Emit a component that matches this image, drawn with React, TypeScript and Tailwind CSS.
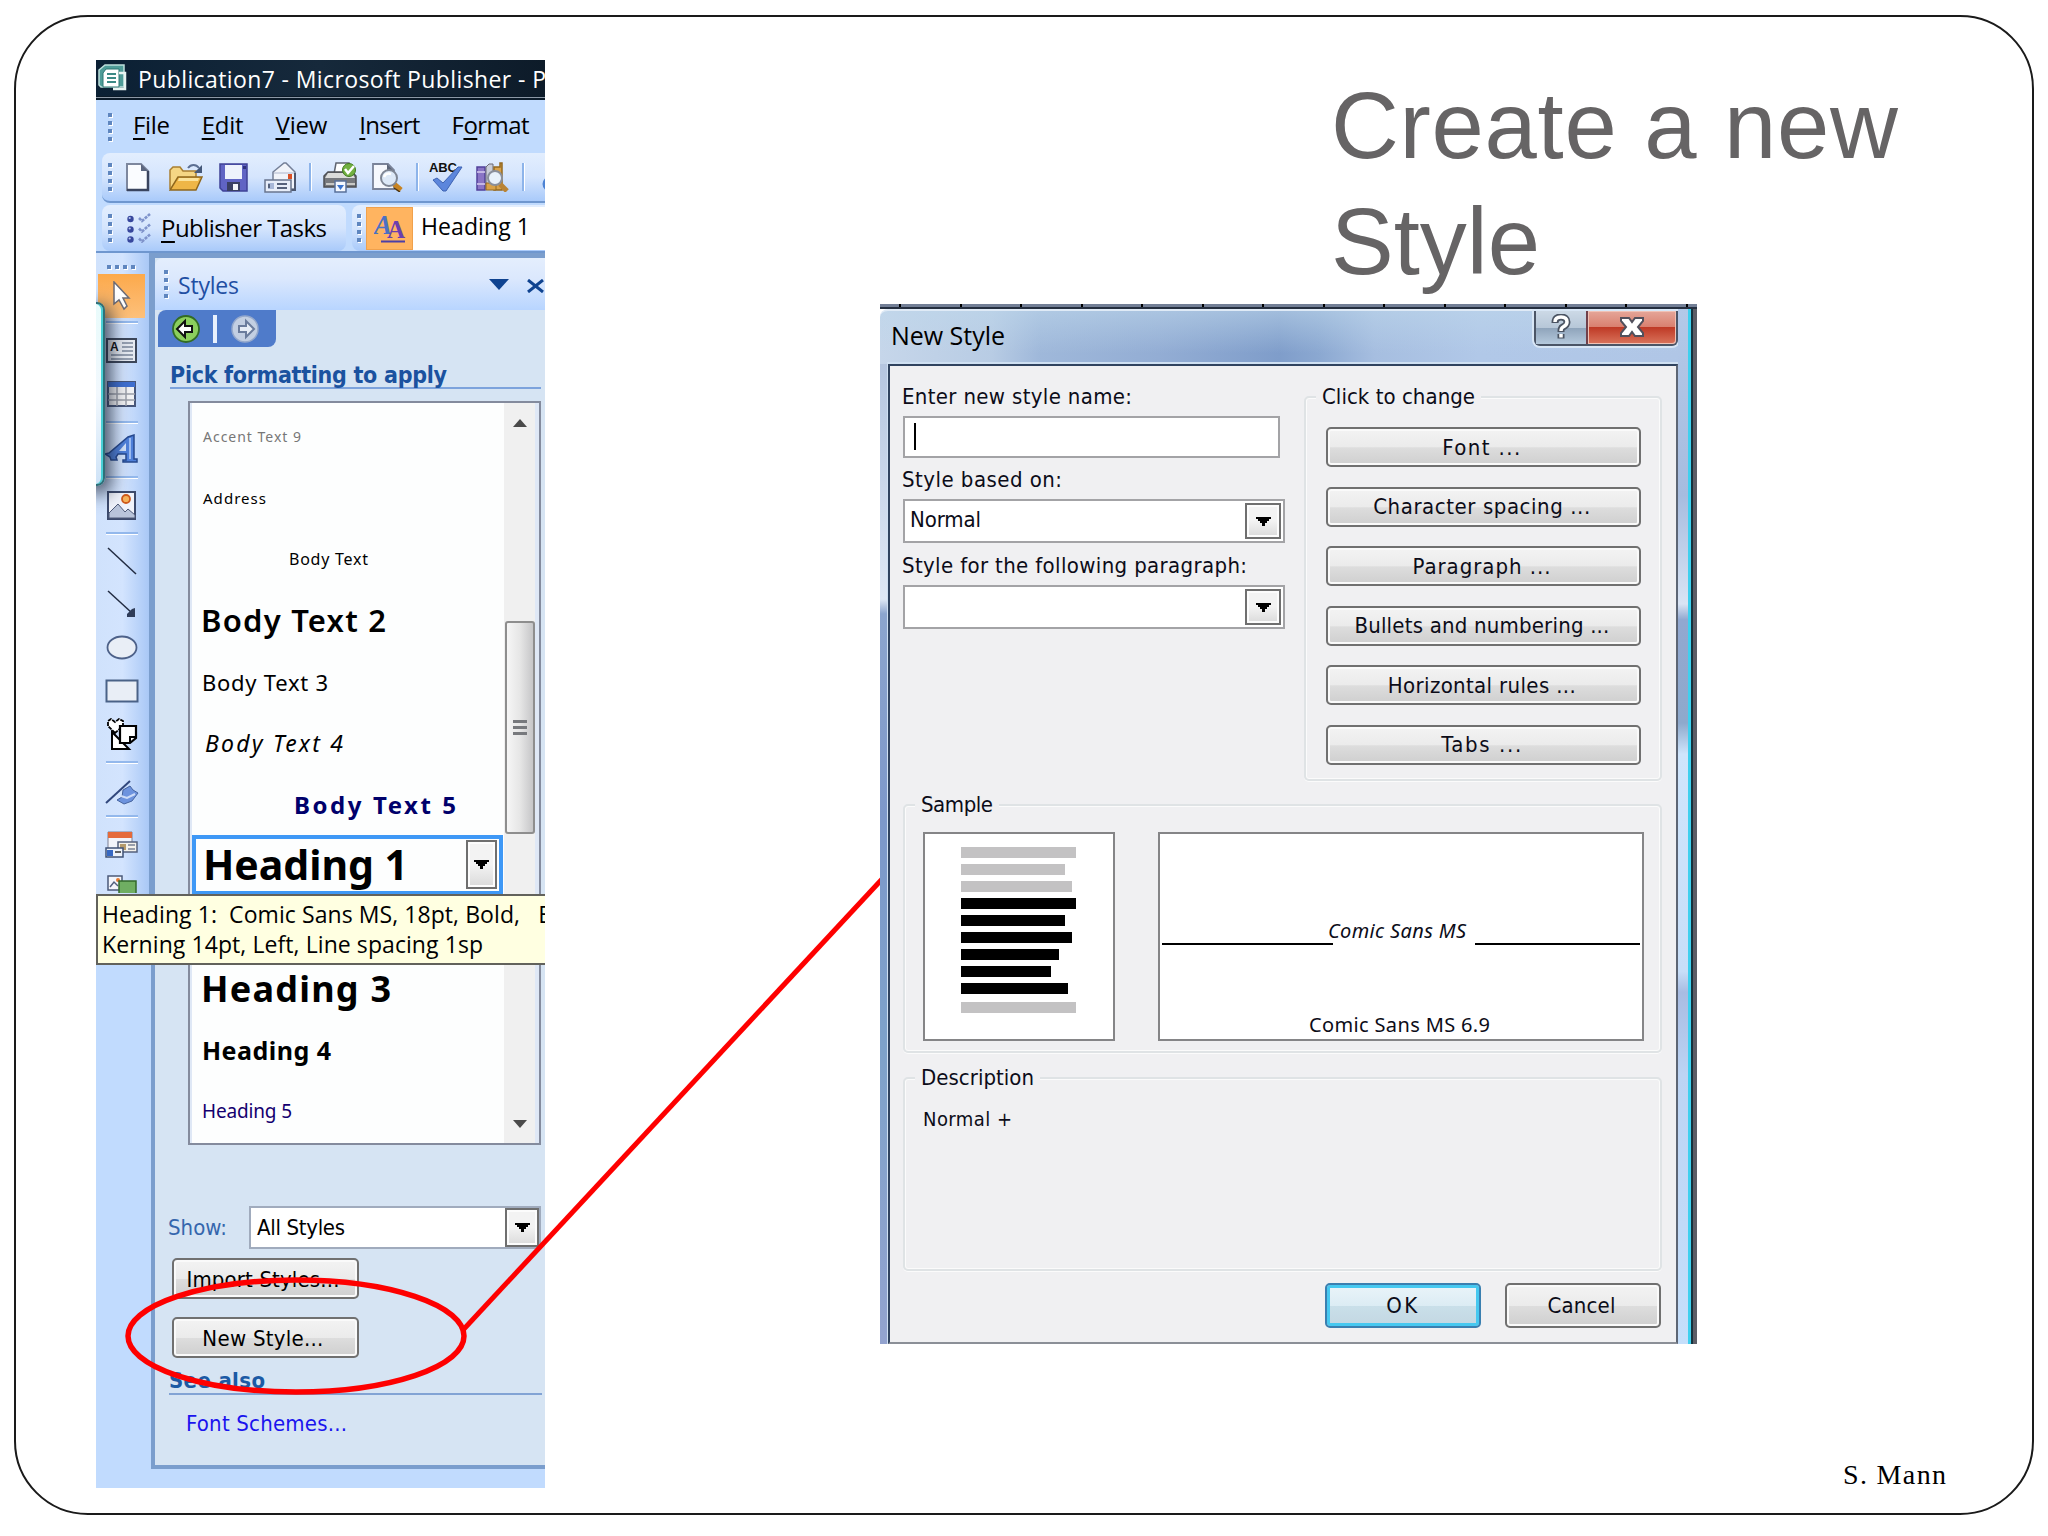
import { useLayoutEffect, useRef, useState } from "react";
import type { ReactNode } from "react";
import clsx from "clsx";

const ui = "font-['Open_Sans','Noto_Sans',sans-serif]";
const tahoma = "font-['DejaVu_Sans_Condensed','DejaVu_Sans',sans-serif]";
const comic = "font-['Noto_Sans','Open_Sans',sans-serif]";

/* One line of text, tracked so that it fills the given width */
function T({
    w,
    className,
    children,
}: {
    w: number;
    className?: string;
    children: ReactNode;
}) {
    const ref = useRef<HTMLSpanElement>(null);
    const [spacing, setSpacing] = useState(0);

    useLayoutEffect(() => {
        const el = ref.current;
        if (!el) return;
        const count = (el.textContent ?? "").length;
        setSpacing((w - el.getBoundingClientRect().width) / Math.max(count - 1, 1));
    }, [w]);

    return (
        <span
            ref={ref}
            className={clsx("inline-block shrink-0 whitespace-pre", className)}
            style={{ letterSpacing: `${spacing}px` }}
        >
            {children}
        </span>
    );
}

function Grip({ row = false }: { row?: boolean }) {
    return (
        <div className={clsx("flex shrink-0 gap-1", row ? "flex-row" : "flex-col")}>
            {[0, 1, 2, 3].map((i) => (
                <span
                    key={i}
                    className="h-1 w-1 bg-[#5f86bf] shadow-[1px_1px_0_#ffffff]"
                />
            ))}
        </div>
    );
}

function Separator() {
    return <div className="h-7 w-[3px] shrink-0 border-r border-white bg-[#8db4ea]" />;
}

function DownArrow() {
    return (
        <svg width="15" height="9" viewBox="0 0 15 9">
            <path d="M0 0h15v2h-2v2h-2v2H9v3H6V6H4V4H2V2H0z" fill="#000" />
        </svg>
    );
}

function DropButton({ className }: { className?: string }) {
    return (
        <div
            className={clsx(
                "flex shrink-0 items-center justify-center border-2 border-[#6f6f6f] bg-gradient-to-b from-[#f3f3f3] from-50% to-[#dadada] shadow-[inset_0_0_0_2px_#fcfcfc]",
                className
            )}
        >
            <DownArrow />
        </div>
    );
}

function PushButton({
    className,
    children,
}: {
    className?: string;
    children: ReactNode;
}) {
    return (
        <div
            className={clsx(
                "flex shrink-0 items-center justify-center rounded-[5px] border-2 border-[#707070] bg-[linear-gradient(#f3f3f3,#ebebeb_50%,#dddddd_52%,#cfcfcf)] leading-[24px] shadow-[inset_0_0_0_2px_#fafafa]",
                className
            )}
        >
            {children}
        </div>
    );
}

/* ---------- Standard toolbar icons ---------- */

function NewDocIcon() {
    return (
        <svg width="24" height="29" viewBox="0 0 24 29">
            <path d="M1 1h14l7 7v19H1z" fill="#fafcff" stroke="#7d879e" strokeWidth="2" />
            <path d="M22 8v19H1" fill="none" stroke="#39445f" strokeWidth="2.5" />
            <path d="M15 1v7h7z" fill="#5c6780" />
        </svg>
    );
}

function OpenIcon() {
    return (
        <svg width="34" height="29" viewBox="0 0 34 29">
            <path d="M1 26V7l3-3h7l3 4h13v8" fill="#f5d684" stroke="#a97f30" strokeWidth="1.5" />
            <path d="M9 14h24l-6 13H1z" fill="#eeb647" stroke="#8f671c" strokeWidth="1.5" />
            <path d="M10 15h20l-1 3H9z" fill="#fbe39b" />
            <path d="M19 5c3-4 8-4 11 0" fill="none" stroke="#5c6f92" strokeWidth="2" />
            <path d="M33 2v8h-8z" fill="#455879" />
        </svg>
    );
}

function SaveIcon() {
    return (
        <svg width="29" height="29" viewBox="0 0 29 29">
            <path d="M1 1h27v27H4l-3-3z" fill="#6064c4" stroke="#3f4297" strokeWidth="1.5" />
            <path d="M6 2h17v14H6z" fill="#eef2fc" />
            <path d="M8 19h13v9H8z" fill="#3a3f63" />
            <path d="M14 21h5v6h-5z" fill="#f3f5fa" />
            <path d="M24 3h3v3h-3z" fill="#2f327c" />
        </svg>
    );
}

function MailIcon() {
    return (
        <svg width="33" height="31" viewBox="0 0 33 31">
            <path d="M9 18V10L20 1h2l9 9v17H20" fill="#f1f4fa" stroke="#747f97" strokeWidth="1.5" />
            <path d="M10 11h20" stroke="#c3cbdb" strokeWidth="1.5" />
            <path d="M31 11v17H20" fill="none" stroke="#4d5870" strokeWidth="2" />
            <path d="M24 12h4v5h-4z" fill="#db5024" />
            <path d="M1 18h26v12H1z" fill="#e7edf8" stroke="#69758f" strokeWidth="1.5" />
            <path d="M4 21h6v6H4z" fill="#a8b8d8" />
            <path d="M13 22h10M13 26h10M5 22v4" stroke="#55617b" strokeWidth="2" />
        </svg>
    );
}

function PrintIcon() {
    return (
        <svg width="34" height="31" viewBox="0 0 34 31">
            <path d="M11 12l2-11h13v11z" fill="#fff" stroke="#5f6470" strokeWidth="1.5" />
            <path d="M1 14l4-4h24l4 4v11H1z" fill="#77797d" stroke="#4c4e52" strokeWidth="1.5" />
            <path d="M5 11h24l3 5H2z" fill="#dcdcda" />
            <path d="M3 22h29" stroke="#c9c9c6" strokeWidth="2" />
            <path d="M12 19h11v11H12z" fill="#f4f8ff" stroke="#58709b" strokeWidth="1.5" />
            <path d="M14 23h7l-3.500 5z" fill="#3a74cf" />
            <circle cx="26" cy="8" r="6.5" fill="#72b040" stroke="#3f7a1d" />
            <path d="M22 7l3 4 6-7" fill="none" stroke="#fff" strokeWidth="2.5" />
        </svg>
    );
}

function PreviewIcon() {
    return (
        <svg width="31" height="30" viewBox="0 0 31 30">
            <path d="M1 2h15l6 6v19H1z" fill="#f6f8fd" stroke="#7a8399" strokeWidth="1.8" />
            <path d="M15 2v7h7z" fill="#5d6679" />
            <path d="M22 22l7 6" stroke="#c78322" strokeWidth="5" />
            <path d="M22 26l6 4" stroke="#4b3413" strokeWidth="1.5" />
            <circle cx="17" cy="16" r="8" fill="#dde9f8" stroke="#7f8694" strokeWidth="2" />
            <path d="M12 15c1-3 4-4 7-3" fill="none" stroke="#fff" strokeWidth="2.5" />
        </svg>
    );
}

function SpellIcon() {
    return (
        <svg width="34" height="30" viewBox="0 0 34 30">
            <text x="0" y="10" fontFamily="Liberation Sans" fontSize="13" fontWeight="700" fill="#111" textLength="28">
                ABC
            </text>
            <path d="M4 18l4-2 6 5L29 5h4L17 29h-3z" fill="#5c86dc" stroke="#3d62b2" />
        </svg>
    );
}

function ResearchIcon() {
    return (
        <svg width="34" height="30" viewBox="0 0 34 30">
            <path d="M1 5h8v23H1z" fill="#8a74c5" stroke="#51409a" strokeWidth="1.5" />
            <path d="M1 10h8M1 22h8" stroke="#d7ccf0" strokeWidth="1.5" />
            <path d="M10 5l3-3h4v25h-7z" fill="#c9cdd8" stroke="#6d6a74" />
            <path d="M18 5h6V1h2v27h-8z" fill="#d9a149" stroke="#94681f" strokeWidth="1.5" />
            <path d="M10 21h10v7H10z" fill="#d9a149" stroke="#94681f" />
            <path d="M24 22l7 7" stroke="#b98335" strokeWidth="5" />
            <circle cx="19" cy="16" r="7" fill="#e8f1fb" stroke="#8a8f9b" strokeWidth="2" />
        </svg>
    );
}

function TasksIcon() {
    return (
        <svg width="25" height="30" viewBox="0 0 25 30">
            {[5, 15.5, 25.5].map((y) => (
                <g key={y}>
                    <circle cx="3.5" cy={y + 1} r="3.2" fill="#37479d" />
                    <circle cx="2.7" cy={y} r="1.1" fill="#b9c6ee" />
                    <path
                        d={`M12 ${y}l3 3 8-7`}
                        fill="none"
                        stroke="#7f93cb"
                        strokeWidth="2.6"
                        strokeDasharray="3 1"
                    />
                </g>
            ))}
        </svg>
    );
}

/* ---------- Objects toolbar, drawn top to bottom ---------- */

function PointerIcon() {
    return (
        <svg width="20" height="30" viewBox="0 0 20 30">
            <path d="M2 1l15 16h-6l4 8-3 3-5-9-5 4z" fill="#fff" stroke="#6b6b76" strokeWidth="1.5" />
        </svg>
    );
}

function TextBoxIcon() {
    return (
        <svg width="32" height="25" viewBox="0 0 32 25">
            <rect x="1" y="1" width="29" height="23" fill="#e6eaf1" stroke="#3d475a" strokeWidth="2" />
            <text x="4" y="13" fontFamily="Liberation Sans" fontWeight="700" fontSize="12" fill="#111">
                A
            </text>
            <path d="M16 5h11M16 9h11M16 13h11M5 17h22M5 21h22" stroke="#7b879a" strokeWidth="1.5" />
        </svg>
    );
}

function TableIcon() {
    return (
        <svg width="30" height="27" viewBox="0 0 30 27">
            <rect x="1" y="1" width="27" height="24" fill="#f2f2f4" stroke="#48577a" strokeWidth="2" />
            <path d="M1 1h27v5H1z" fill="#3f6fd0" />
            <path d="M1 13h27M1 19h27M10 6v19M19 6v19" stroke="#9b9fa8" strokeWidth="1.5" />
        </svg>
    );
}

function WordArtIcon() {
    return (
        <svg width="33" height="30" viewBox="0 0 33 30">
            <path
                d="M0 20l4-1L23 3l6-2v24h3v3H18v-2h3v-6h-8l-2 3 1 3H6l-1-3z"
                fill="#4f80da"
                stroke="#27498f"
                strokeWidth="1.5"
            />
            <path d="M14 17l7-8v8z" fill="#d4e3fb" />
            <path d="M25 4v21" stroke="#9dbdf2" strokeWidth="2" />
        </svg>
    );
}

function PictureIcon() {
    return (
        <svg width="30" height="29" viewBox="0 0 30 29">
            <rect x="1" y="1" width="27" height="27" fill="#f0f3fb" stroke="#3c4a6c" strokeWidth="2" />
            <circle cx="19" cy="8" r="4" fill="#f6b25a" stroke="#cf5a1b" strokeWidth="1.8" />
            <path d="M2 22l9-9 7 8 3-3 7 6v3H2z" fill="#b9c4da" stroke="#4e5a78" />
        </svg>
    );
}

function LineIcon() {
    return (
        <svg width="30" height="28" viewBox="0 0 30 28">
            <path d="M1 1l28 26" stroke="#222c42" strokeWidth="1.5" />
        </svg>
    );
}

function ArrowIcon() {
    return (
        <svg width="30" height="28" viewBox="0 0 30 28">
            <path d="M1 1l24 22" stroke="#222c42" strokeWidth="1.5" />
            <path d="M28 18v9h-8v-3l5-5z" fill="#2f3c58" />
        </svg>
    );
}

function EllipseIcon() {
    return (
        <svg width="32" height="25" viewBox="0 0 32 25">
            <ellipse cx="16" cy="12.5" rx="14.5" ry="11" fill="#e9eef6" stroke="#4d6189" strokeWidth="1.8" />
        </svg>
    );
}

function RectIcon() {
    return (
        <svg width="34" height="24" viewBox="0 0 34 24">
            <rect x="1.5" y="1.5" width="31" height="21" fill="#e9eef6" stroke="#4a6287" strokeWidth="2" />
        </svg>
    );
}

function ShapesIcon() {
    return (
        <svg width="32" height="33" viewBox="0 0 32 33">
            <path d="M9 15L2 8V3l3-2 4 3 4-3 4 2v5z" fill="#fff" stroke="#000" strokeWidth="1.8" strokeDasharray="4 1" />
            <path d="M6 14v17h17l-9-9z" fill="#fff" stroke="#000" strokeWidth="2" />
            <path d="M14 8h16v12l-6 5H14z" fill="#fff" stroke="#000" strokeWidth="2.2" />
            <path d="M30 19h-6v6" fill="none" stroke="#000" strokeWidth="2" />
        </svg>
    );
}

function BookmarkIcon() {
    return (
        <svg width="34" height="25" viewBox="0 0 34 25">
            <path d="M18 10l7-4 3 4 5 3-6 8-8 3-7-4 5-3z" fill="#6d93de" stroke="#46649f" />
            <path d="M16 16l6 2 8-4" fill="none" stroke="#cddcf8" strokeWidth="2" />
            <path d="M1 23L25 1" stroke="#31477c" strokeWidth="2" />
        </svg>
    );
}

function DesignGalleryIcon() {
    return (
        <svg width="33" height="27" viewBox="0 0 33 27">
            <path d="M3 1h24v18H3z" fill="#f2f4fa" stroke="#7c7f92" />
            <path d="M3 1h24v6H3z" fill="#e56a3a" />
            <path d="M13 11h19v10H13z" fill="#f4f1ea" stroke="#54607c" strokeWidth="1.5" />
            <path d="M15 13h6v6h-6z" fill="#b59a6a" />
            <path d="M23 14h7M23 18h7" stroke="#7a8296" strokeWidth="1.5" />
            <path d="M1 17h17v9H1z" fill="#eef3fb" stroke="#3f5276" strokeWidth="1.5" />
            <path d="M2 19h6v6H2z" fill="#3768c2" />
            <path d="M10 21h6" stroke="#333" strokeWidth="1.5" />
        </svg>
    );
}

function LibraryIcon() {
    return (
        <svg width="30" height="18" viewBox="0 0 30 18">
            <rect x="1" y="1" width="14" height="14" fill="#f3f5fb" stroke="#4b5a7a" strokeWidth="1.5" />
            <path d="M3 12l4-5 4 4" fill="none" stroke="#53617e" strokeWidth="1.5" />
            <circle cx="11" cy="5" r="2" fill="#e47b33" />
            <rect x="12" y="6" width="17" height="14" fill="#6fae62" stroke="#33692c" strokeWidth="1.5" />
        </svg>
    );
}

const tools: { top: string; icon?: ReactNode }[] = [
    { top: "mt-[3px]" },
    { top: "mt-[14px]", icon: <TextBoxIcon /> },
    { top: "mt-[18px]", icon: <TableIcon /> },
    { top: "mt-[13px]" },
    { top: "mt-[10px]", icon: <WordArtIcon /> },
    { top: "mt-[12px]" },
    { top: "mt-[12px]", icon: <PictureIcon /> },
    { top: "mt-[12px]" },
    { top: "mt-[12px]", icon: <LineIcon /> },
    { top: "mt-[15px]", icon: <ArrowIcon /> },
    { top: "mt-[17px]", icon: <EllipseIcon /> },
    { top: "mt-[19px]", icon: <RectIcon /> },
    { top: "mt-[15px]", icon: <ShapesIcon /> },
    { top: "mt-[10px]" },
    { top: "mt-[16px]", icon: <BookmarkIcon /> },
    { top: "mt-[10px]" },
    { top: "mt-[13px]", icon: <DesignGalleryIcon /> },
    { top: "mt-[17px]", icon: <LibraryIcon /> },
];

function ObjectsToolbar() {
    return (
        <div className="flex h-[700px] w-full shrink-0 flex-col items-center border-r-[6px] border-[#7b9ecd] bg-gradient-to-r from-[#d0e2fc] via-[#d3e4fe] via-50% to-[#a9c8f6]">
            <div className="mt-[12px] mr-1">
                <Grip row />
            </div>
            <div className="mt-[5px] mr-[6px] ml-[4px] flex h-[44px] w-[47px] items-center justify-center bg-gradient-to-b from-[#fca94a] to-[#fdc07a]">
                <PointerIcon />
            </div>
            {tools.map((tool, i) => (
                <div key={i} className={clsx("mr-[2px] flex shrink-0 justify-center", tool.top)}>
                    {tool.icon ?? <div className="h-[3px] w-8 border-b border-white bg-[#93b8ec]" />}
                </div>
            ))}
        </div>
    );
}

/* ---------- Styles task pane ---------- */

const styleRows: { name: string; w: number; className: string }[] = [
    { name: "Accent Text 9", w: 98, className: "pl-[11px] text-[14px] text-[#777777]" },
    { name: "Address", w: 63, className: "pl-[11px] text-[15px]" },
    { name: "Body Text", w: 79, className: "pl-[97px] text-[16px]" },
    { name: "Body Text 2", w: 185, className: "pl-[9px] text-[31px] font-semibold" },
    { name: "Body Text 3", w: 126, className: "pl-[10px] text-[22px]" },
    { name: "Body Text 4", w: 138, className: "pl-[13px] text-[23px] italic" },
    { name: "Body Text 5", w: 162, className: "pl-[102px] text-[24px] font-bold text-[#00006b]" },
    { name: "Heading 1", w: 205, className: "text-[41px] font-bold" },
    { name: "Heading 2", w: 190, className: "pl-[9px] text-[36px] font-bold" },
    { name: "Heading 3", w: 190, className: "pl-[9px] text-[36px] font-bold" },
    { name: "Heading 4", w: 129, className: "pl-[10px] text-[25px] font-bold" },
    { name: "Heading 5", w: 90, className: "pl-[10px] text-[19px] text-[#14006f]" },
];

function StyleList() {
    return (
        <div className="mt-[12px] ml-[33px] flex h-[744px] w-[353px] shrink-0 overflow-hidden border-2 border-[#848b9d] bg-[#dfe8f6] pl-[2px]">
            <div className={clsx("flex w-[312px] shrink-0 flex-col bg-[#fdfefe] pt-[2px] text-black", comic)}>
                {styleRows.map((row, i) =>
                    row.name === "Heading 1" ? (
                        <div
                            key={i}
                            className={clsx(
                                "mb-[1px] flex h-[60.4px] w-[311px] shrink-0 items-center justify-between border-4 border-[#3e98f6] pr-[2px] pl-[7px] leading-none",
                                row.className
                            )}
                        >
                            <T w={row.w}>{row.name}</T>
                            <DropButton className="h-[49px] w-[31px]" />
                        </div>
                    ) : (
                        <div
                            key={i}
                            className={clsx("flex h-[61.4px] shrink-0 items-center pt-[2px] leading-none", row.className)}
                        >
                            <T w={row.w}>{row.name}</T>
                        </div>
                    )
                )}
            </div>
            {/* Scroll bar */}
            <div className="flex w-[31px] shrink-0 flex-col items-center bg-[#f0f0f0] pt-[16px] pb-[15px]">
                <svg width="14" height="8" viewBox="0 0 14 8">
                    <path d="M7 0l7 8H0z" fill="#4a4a4a" />
                </svg>
                <div className="mt-[194px] flex h-[213px] w-[30px] flex-col items-center justify-center gap-[3px] rounded-[3px] border-2 border-[#8e8e8e] bg-gradient-to-r from-[#f6f6f6] via-[#e6e6e6] to-[#c6c6c8]">
                    <span className="h-[3px] w-[14px] bg-[#77797d]" />
                    <span className="h-[3px] w-[14px] bg-[#77797d]" />
                    <span className="h-[3px] w-[14px] bg-[#77797d]" />
                </div>
                <svg className="mt-auto" width="14" height="8" viewBox="0 0 14 8">
                    <path d="M0 0h14L7 8z" fill="#4a4a4a" />
                </svg>
            </div>
        </div>
    );
}

function StylesPane() {
    return (
        <div className="flex min-w-0 flex-1 flex-col border-t-[5px] border-b-4 border-[#7b9ecd] bg-[#d6e4f3]">
            <div className="flex h-[52px] shrink-0 items-center rounded-tl-lg bg-gradient-to-b from-[#e4eefd] via-[#dbe8fd] via-40% to-[#b8d5ff] pl-[9px]">
                <Grip />
                <T w={61} className="mt-[2px] ml-[10px] text-[23px] text-[#1f4fa3]">
                    Styles
                </T>
                <svg className="ml-auto shrink-0" width="20" height="11" viewBox="0 0 20 11">
                    <path d="M0 0h20L10 11z" fill="#0f4390" />
                </svg>
                <svg className="mt-1 mr-[1px] ml-[18px] shrink-0" width="17" height="14" viewBox="0 0 17 14">
                    <path d="M1 1l15 12M16 1L1 13" stroke="#0f4390" strokeWidth="3" />
                </svg>
            </div>
            <div className="ml-[3px] flex h-[37px] w-[118px] shrink-0 items-center rounded-tl-lg rounded-br-lg bg-[#4f7bca] pl-[14px]">
                <svg width="28" height="28" viewBox="0 0 28 28">
                    <circle cx="14" cy="14" r="13" fill="#8bcf5d" stroke="#336c24" strokeWidth="1.8" />
                    <path d="M5 14l8-8v5h7v6h-7v5z" fill="#fff" stroke="#111" strokeWidth="2" />
                </svg>
                <span className="ml-[13px] h-7 w-[4px] bg-[#e9f1fd]" />
                <svg className="ml-[14px]" width="28" height="28" viewBox="0 0 28 28">
                    <circle cx="14" cy="14" r="13" fill="#c3cfe2" stroke="#94a8cc" strokeWidth="1.5" />
                    <path d="M23 14l-8-8v5H8v6h7v5z" fill="#e7edf6" stroke="#6b7c9c" strokeWidth="2" />
                </svg>
            </div>
            <div className="mt-[14px] ml-[15px] h-[28px] w-[371px] shrink-0 border-b-2 border-[#7da3dc] leading-[28px]">
                <T w={277} className={clsx("text-[23px] font-bold text-[#1b529f]", tahoma)}>
                    Pick formatting to apply
                </T>
            </div>
            <StyleList />

            {/* Show filter and buttons */}
            <div className={clsx("mt-[61px] ml-[14px] flex h-[43px] shrink-0 items-center text-[22px]", tahoma)}>
                <T w={59} className="-ml-px text-[#3566ad]">
                    Show:
                </T>
                <div className="ml-[22px] flex h-[43px] w-[292px] items-center justify-between border-2 border-[#a0abbd] bg-white pl-[6px] text-black">
                    <T w={88}>All Styles</T>
                    <DropButton className="h-[39px] w-[34px]" />
                </div>
            </div>
            <PushButton className={clsx("mt-[9px] ml-[17px] h-[41px] w-[187px] text-[22px]", tahoma)}>
                <T w={153} className="mt-[2px] mr-[5px]">
                    Import Styles...
                </T>
            </PushButton>
            <PushButton className={clsx("mt-[18px] ml-[17px] h-[41px] w-[187px] text-[22px]", tahoma)}>
                <T w={121} className="mt-[2px] mr-[5px]">
                    New Style...
                </T>
            </PushButton>
            <div className="mt-[9px] ml-[14px] h-[28px] w-[373px] shrink-0 border-b-2 border-[#82a3d4] leading-[27px]">
                <T w={96} className={clsx("text-[22px] font-bold text-[#1b5aa5]", tahoma)}>
                    See also
                </T>
            </div>
            <div className="mt-[16px] ml-[31px] leading-[26px]">
                <T w={161} className={clsx("text-[22px] text-[#1a14ee]", tahoma)}>
                    Font Schemes...
                </T>
            </div>
        </div>
    );
}

/* ---------- Publisher window, cut off at the right ---------- */

function PublisherWindow() {
    return (
        <div className={clsx("relative mt-[43px] ml-[80px] flex h-[1428px] w-[449px] shrink-0 flex-col overflow-hidden bg-[#c1dbfe] text-black", ui)}>
            {/* Title bar */}
            <div className="flex h-[36px] shrink-0 items-center bg-gradient-to-r from-[#0b2034] via-[#16293b] to-[#0d1b29] pl-[2px] text-white">
                <svg className="shrink-0" width="29" height="28" viewBox="0 0 29 28">
                    <path d="M1 6l6-5h19v22H3l-2-2z" fill="#4f9c98" stroke="#bfe0dc" strokeWidth="1.5" />
                    <path d="M8 5h13v18H5V9z" fill="#fff" stroke="#2c7673" />
                    <path d="M9 10h9M9 14h9M9 18h9" stroke="#3c8a86" strokeWidth="2" />
                    <path d="M21 9h6v16H15" fill="none" stroke="#e8f4f2" strokeWidth="2.5" />
                </svg>
                <T w={408} className="mt-[2px] ml-[11px] text-[23px] font-medium">
                    Publication7 - Microsoft Publisher - P
                </T>
            </div>
            <div className="h-[4px] shrink-0 border-t border-b-2 border-t-[#0b1a28] border-b-[#0b1a28] bg-[#8c98a6]" />

            {/* Menu bar */}
            <div className="flex h-[53px] shrink-0 items-center pl-[12px] text-[24px] [&_u]:decoration-2 [&_u]:underline-offset-4">
                <Grip />
                <T w={37} className="-mt-[4px] ml-[21px]">
                    <u>F</u>ile
                </T>
                <T w={42} className="-mt-[4px] ml-[32px]">
                    <u>E</u>dit
                </T>
                <T w={52} className="-mt-[4px] ml-[32px]">
                    <u>V</u>iew
                </T>
                <T w={61} className="-mt-[4px] ml-[32px]">
                    <u>I</u>nsert
                </T>
                <T w={78} className="-mt-[4px] ml-[32px]">
                    F<u>o</u>rmat
                </T>
            </div>

            {/* Standard toolbar */}
            <div className="ml-[6px] flex h-[50px] shrink-0 items-center rounded-l-lg border-b-2 border-[#6f97cf] bg-gradient-to-b from-[#e3eefe] via-[#d5e5fd] via-50% to-[#a9cafa] pl-[6px]">
                <Grip />
                <div className="ml-[14px] flex items-center">
                    <NewDocIcon />
                    <span className="w-[19px]" />
                    <OpenIcon />
                    <span className="w-[16px]" />
                    <SaveIcon />
                    <span className="w-[16px]" />
                    <MailIcon />
                    <span className="w-[12px]" />
                    <Separator />
                    <span className="w-[11px]" />
                    <PrintIcon />
                    <span className="w-[15px]" />
                    <PreviewIcon />
                    <span className="w-[13px]" />
                    <Separator />
                    <span className="w-[10px]" />
                    <SpellIcon />
                    <span className="w-[13px]" />
                    <ResearchIcon />
                    <span className="w-[12px]" />
                    <Separator />
                    <svg className="ml-[17px] shrink-0" width="10" height="30" viewBox="0 0 10 30">
                        <circle cx="8" cy="22" r="6" fill="none" stroke="#4d83d4" strokeWidth="3" />
                    </svg>
                </div>
            </div>

            {/* Task and style toolbars */}
            <div className="flex h-[50px] shrink-0 gap-[6px] border-b-2 border-[#6f97cf] pt-[2px] pl-[6px]">
                <div className="flex w-[244px] shrink-0 items-center rounded-lg bg-gradient-to-b from-[#e3eefe] via-[#d5e5fd] via-50% to-[#a9cafa] pl-[6px]">
                    <Grip />
                    <span className="w-[15px]" />
                    <TasksIcon />
                    <T w={166} className="ml-[9px] text-[24px] [&_u]:decoration-2 [&_u]:underline-offset-4">
                        <u>P</u>ublisher Tasks
                    </T>
                </div>
                <div className="flex flex-1 items-center rounded-l-lg bg-gradient-to-b from-[#e3eefe] via-[#d5e5fd] via-50% to-[#a9cafa] pl-[5px]">
                    <Grip />
                    <div className="ml-[5px] flex h-[43px] w-[47px] shrink-0 items-center justify-center border border-[#f0a14c] bg-[#ffb460]">
                        <svg width="32" height="32" viewBox="0 0 32 32">
                            <text x="0" y="22" fontFamily="Liberation Serif" fontStyle="italic" fontWeight="700" fontSize="27" fill="#4c70c2">
                                A
                            </text>
                            <text x="13" y="26" fontFamily="Liberation Serif" fontWeight="700" fontSize="25" fill="#6b3fae">
                                A
                            </text>
                            <path d="M7 29.5h24" stroke="#4b3fa8" strokeWidth="2" />
                        </svg>
                    </div>
                    <div className="flex h-[43px] flex-1 items-center bg-white pl-[8px]">
                        <T w={109} className="-mt-[3px] text-[23px]">
                            Heading 1
                        </T>
                    </div>
                </div>
            </div>

            {/* Objects toolbar and task pane */}
            <div className="flex h-[1216px] shrink-0">
                <div className="flex w-[59px] shrink-0 flex-col">
                    <ObjectsToolbar />
                    <div className="flex-1 border-r-4 border-[#7b9ecd]" />
                </div>
                <StylesPane />
            </div>

            {/* Edge of a hovering popup */}
            <div className="absolute top-[242px] -left-3 h-[184px] w-[21px] rounded-[8px] border-2 border-[#2f6f78] bg-gradient-to-b from-[#e9fbfb] via-[#f2f8fd] to-[#cfe3f7] shadow-[inset_-2px_0_0_#49d0d6,4px_6px_18px_2px_rgba(20,28,45,0.75)]" />

            {/* Style tooltip */}
            <div className="absolute top-[834px] left-0 h-[71px] w-[480px] border-2 border-[#62625c] bg-[#ffffe1] pt-[3px] pl-[4px] text-[23px]">
                <div className="flex h-[30px] items-center">
                    <T w={449} className="leading-[30px]">
                        {"Heading 1:  Comic Sans MS, 18pt, Bold,   E"}
                    </T>
                </div>
                <div className="flex h-[30px] items-center">
                    <T w={381} className="leading-[30px]">
                        Kerning 14pt, Left, Line spacing 1sp
                    </T>
                </div>
            </div>
        </div>
    );
}

/* ---------- New Style dialog ---------- */

const changeButtons = [
    { label: "Font ...", w: 78 },
    { label: "Character spacing ...", w: 217 },
    { label: "Paragraph ...", w: 138 },
    { label: "Bullets and numbering ...", w: 255 },
    { label: "Horizontal rules ...", w: 188 },
    { label: "Tabs ...", w: 80 },
];

const sampleBars = [
    "w-[115px] bg-[#c3c2c3]",
    "w-[104px] bg-[#c3c2c3]",
    "w-[111px] bg-[#c3c2c3]",
    "w-[115px] bg-black",
    "w-[104px] bg-black",
    "w-[111px] bg-black",
    "w-[98px] bg-black",
    "w-[90px] bg-black",
    "w-[107px] bg-black",
    "w-[115px] bg-[#c3c2c3] mt-[2px]",
];

function Group({
    legend,
    legendWidth,
    className,
    children,
}: {
    legend: string;
    legendWidth: number;
    className?: string;
    children?: ReactNode;
}) {
    return (
        <div className={clsx("flex shrink-0 flex-col rounded-[5px] border-2 border-[#dfe3e5] shadow-[inset_0_0_0_1px_#fbfbfb,0_1px_0_#fbfbfb]", className)}>
            <div className="-mt-[14px] ml-[10px] h-[26px] self-start bg-[#f0f0f2] px-[6px] leading-[26px]">
                <T w={legendWidth}>{legend}</T>
            </div>
            {children}
        </div>
    );
}

function NewStyleDialog() {
    return (
        <div className={clsx("flex h-[1040px] w-[817px] shrink-0 flex-col text-[22px] text-[#0c0c18]", tahoma)}>
            {/* Ruler strip showing behind the window */}
            <div className="flex h-[5px] shrink-0 border-b-2 border-[#252f40] bg-[#737f96] pl-[19px]">
                {Array.from({ length: 14 }, (_, i) => (
                    <span key={i} className="mr-[58.5px] w-[2px] shrink-0 bg-black" />
                ))}
            </div>

            <div className="flex min-h-0 flex-1">
                <div className="flex min-w-0 flex-1 flex-col">
                    {/* Title bar */}
                    <div className="flex h-[55px] shrink-0 items-start justify-between rounded-tl-lg border-t-2 border-[#dfeaf6] bg-[linear-gradient(to_bottom,rgba(190,215,235,0.55),rgba(190,215,235,0)_80%),linear-gradient(to_right,#c6d6ea,#b8cce4_14%,#9fb8da_20%,#93add4_35%,#7f9dca_50%,#8ba8d1_55%,#a6bee0_62%,#b1c8e8_75%,#b0c6e6)] pl-[11px]">
                        <T w={114} className={clsx("mt-[8px] text-[25px] leading-[32px] text-black", ui)}>
                            New Style
                        </T>
                        <div className="flex h-[35px] rounded-b-md border-2 border-t-0 border-[#4b5566] shadow-[0_0_0_2px_#d8e6f5]">
                            <div className="flex w-[52px] items-center justify-center border-r-2 border-[#71404a] bg-[linear-gradient(#ccd9e6,#b7c7d8_50%,#8fa4bb_52%,#b5c9dc)]">
                                <svg width="20" height="28" viewBox="0 0 20 28">
                                    <path d="M4 9c0-4 2-6 6-6s6 2 6 5-2 4-4 5-2 2-2 5M10 20v4.500" fill="none" stroke="#4b5463" strokeWidth="7" />
                                    <path d="M4 8c0-3 2-5 6-5s6 2 6 5-2 4-4 5-2 2-2 4M10 20v3.500" fill="none" stroke="#fff" strokeWidth="3.500" />
                                </svg>
                            </div>
                            <div className="flex w-[88px] items-center justify-center rounded-br bg-[linear-gradient(#e5a699,#d9806f_48%,#bf3a26_50%,#d9745c)] shadow-[inset_0_0_0_1px_#f0c2b6]">
                                <svg width="24" height="21" viewBox="0 0 24 21">
                                    <path
                                        d="M1 1h8l3 4 3-4h8v3l-5 6 5 6v3h-8l-3-4-3 4H1v-3l5-6-5-6z"
                                        fill="#fff"
                                        stroke="#50505c"
                                        strokeWidth="2"
                                    />
                                </svg>
                            </div>
                        </div>
                    </div>

                    <div className="flex min-h-0 flex-1">
                        <div className="w-[8px] shrink-0 bg-[linear-gradient(#b5c6e0,#dfe8f5_24%,#8ca5ce_25.500%,#7d98ca_46%,#7ea2ca_70%,#93a3cf)]" />
                        <div className="flex min-w-0 flex-1 flex-col border-2 border-[#30435f] border-r-[#5d6675] border-b-[#8b8f97] bg-[#f0f0f2] shadow-[0_-1px_0_1px_#cfe0f2]">
                            {/* Names on the left, format buttons on the right */}
                            <div className="flex">
                                <div className="ml-[13px] flex w-[382px] flex-col pt-[18px] leading-[26px]">
                                    <T w={230} className="-ml-px self-start">
                                        Enter new style name:
                                    </T>
                                    <div className="mt-[6px] flex h-[42px] w-[377px] items-start border-2 border-[#a3a3a6] bg-white pt-[5px] pl-[9px]">
                                        <span className="h-[27px] w-[2px] bg-black" />
                                    </div>
                                    <T w={160} className="mt-[9px] -ml-px self-start">
                                        Style based on:
                                    </T>
                                    <div className="mt-[6px] flex h-[44px] items-center justify-between border-2 border-[#a3a3a6] bg-white pr-[2px] pl-[5px]">
                                        <T w={71} className="mb-[2px]">
                                            Normal
                                        </T>
                                        <DropButton className="h-[36px] w-[36px]" />
                                    </div>
                                    <T w={345} className="mt-[10px] -ml-px self-start">
                                        Style for the following paragraph:
                                    </T>
                                    <div className="mt-[6px] flex h-[44px] items-center justify-end border-2 border-[#a3a3a6] bg-white pr-[2px]">
                                        <DropButton className="h-[36px] w-[36px]" />
                                    </div>
                                </div>
                                <Group legend="Click to change" legendWidth={153} className="mt-[30px] ml-[19px] h-[385px] w-[358px]">
                                    <div className="mt-[17px] ml-[20px] flex flex-col gap-[19.600px]">
                                        {changeButtons.map((button) => (
                                            <PushButton key={button.label} className="h-[40px] w-[315px]">
                                                <T w={button.w} className="mt-[1px] mr-[3px]">
                                                    {button.label}
                                                </T>
                                            </PushButton>
                                        ))}
                                    </div>
                                </Group>
                            </div>

                            <Group legend="Sample" legendWidth={72} className="mt-[23px] ml-[13px] h-[249px] w-[759px]">
                                <div className="mt-[14px] ml-[18px] flex gap-[43px]">
                                    <div className="flex h-[209px] w-[192px] shrink-0 flex-col gap-[6px] border-2 border-[#858587] bg-white pt-[13px] pl-[36px]">
                                        {sampleBars.map((bar, i) => (
                                            <span key={i} className={clsx("h-[11px] shrink-0", bar)} />
                                        ))}
                                    </div>
                                    <div className={clsx("flex h-[209px] w-[486px] shrink-0 flex-col border-2 border-[#858587] bg-white px-[2px] text-[20px] leading-[26px]", comic)}>
                                        <div className="mt-[85px] flex h-[26px] items-end">
                                            <span className="h-[2px] w-[171px] bg-black" />
                                            <T w={138} className="mb-[1px] -ml-[5px] italic">
                                                Comic Sans MS
                                            </T>
                                            <span className="ml-auto h-[2px] w-[165px] bg-black" />
                                        </div>
                                        <T w={181} className="mt-[67px] ml-[147px] self-start">
                                            Comic Sans MS 6.9
                                        </T>
                                    </div>
                                </div>
                            </Group>

                            <Group legend="Description" legendWidth={113} className="mt-[24px] ml-[13px] h-[194px] w-[759px]">
                                <T w={89} className="mt-[15px] ml-[18px] self-start text-[20px] leading-[26px]">
                                    Normal +
                                </T>
                            </Group>

                            <div className="mt-[12px] flex gap-[24px] pl-[435px]">
                                <div className="flex h-[45px] w-[156px] items-center justify-center rounded-[5px] border-2 border-[#3a7fb0] bg-[linear-gradient(#eaf4f9,#dcecf4_50%,#c9dfe9_52%,#c3d7e2)] shadow-[inset_0_0_0_3px_#46c8f0]">
                                    <T w={31}>OK</T>
                                </div>
                                <PushButton className="h-[45px] w-[156px]">
                                    <T w={68} className="mr-[3px]">
                                        Cancel
                                    </T>
                                </PushButton>
                            </div>
                        </div>
                    </div>
                </div>

                {/* Right glass edge */}
                <div className="w-[10px] shrink-0 bg-[linear-gradient(#b3c9e8,#a6bcdf_18%,#d9e4f4_28.500%,#92a8d0_30%,#8ea9cc_40%,#cfe5fc_43%,#c7def8_64%,#a8bce2_66%,#bcd4f4_74%,#c5dffb)]" />
                <div className="w-[3px] shrink-0 bg-[#3fd0ee]" />
                <div className="w-[2px] shrink-0 bg-[#16323e]" />
                <div className="w-[4px] shrink-0 bg-[#5b5d66]" />
            </div>
        </div>
    );
}

export default function App() {
    return (
        <main className="h-[1536px] w-[2048px] overflow-hidden bg-white pt-[15px] pl-[14px]">
            <div className="relative flex h-[1500px] w-[2020px] rounded-[74px] border-2 border-[#1a1a1a]">
                <PublisherWindow />

                {/* Callout from the New Style button to the dialog */}
                <svg className="absolute inset-0" width="2016" height="1496" viewBox="16 17 2016 1496">
                    <ellipse cx="296" cy="1336" rx="168" ry="56" fill="none" stroke="#fe0000" strokeWidth="5.500" />
                    <path d="M463 1330L884 877" stroke="#fe0000" strokeWidth="5" />
                </svg>

                <div className="relative ml-[335px] flex w-[1152px] flex-col">
                    <h1 className="flex h-[287px] shrink-0 flex-col items-start pt-[51px] pl-[451px] font-['Liberation_Sans',Arial,sans-serif] text-[94px] leading-[116px] text-[#666465]">
                        <T w={567}>Create a new</T>
                        <T w={209}>Style</T>
                    </h1>
                    <NewStyleDialog />
                    <p className="mt-[115px] ml-[963px] font-['Liberation_Serif',serif] text-[28px] leading-[32px] text-black">
                        <T w={103}>S. Mann</T>
                    </p>
                </div>
            </div>
        </main>
    );
}
